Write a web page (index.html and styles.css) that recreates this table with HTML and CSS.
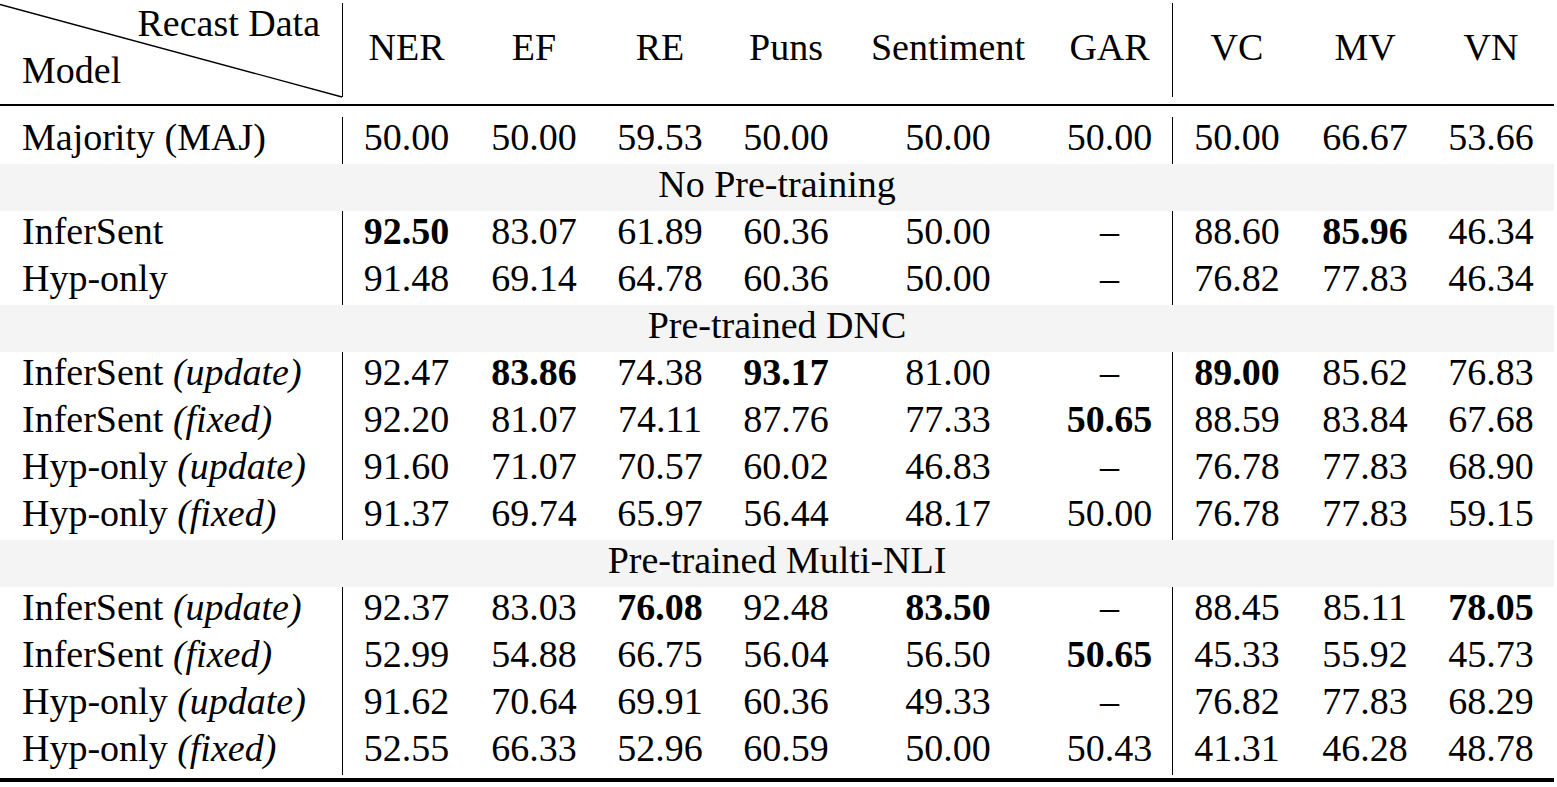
FILE: index.html
```html
<!DOCTYPE html>
<html lang="en">
<head>
<meta charset="utf-8">
<title>Recast Data Results</title>
<link rel="stylesheet" href="styles.css">
</head>
<body>
<table class="results">
  <colgroup>
    <col class="c-model">
    <col class="c-ner">
    <col class="c-std">
    <col class="c-std">
    <col class="c-std">
    <col class="c-sent">
    <col class="c-gar">
    <col class="c-vc">
    <col class="c-std">
    <col class="c-std">
  </colgroup>
  <thead>
    <tr class="head">
      <th class="diag">
        <svg class="diag-line" viewBox="0 0 342 94" preserveAspectRatio="none" aria-hidden="true">
          <line x1="0" y1="1.5" x2="342" y2="94" />
        </svg>
        <div class="recast">Recast Data</div>
        <div class="model">Model</div>
      </th>
      <th class="vl">NER</th>
      <th>EF</th>
      <th>RE</th>
      <th>Puns</th>
      <th>Sentiment</th>
      <th>GAR</th>
      <th class="vl">VC</th>
      <th>MV</th>
      <th>VN</th>
    </tr>
  </thead>
  <tbody>
    <tr class="rule-row mid"><td colspan="10"><div class="rule thin"></div></td></tr>
    <tr>
      <td class="name">Majority (MAJ)</td>
      <td class="vl">50.00</td><td>50.00</td><td>59.53</td><td>50.00</td><td>50.00</td><td>50.00</td>
      <td class="vl">50.00</td><td>66.67</td><td>53.66</td>
    </tr>
    <tr><td class="section" colspan="10">No Pre-training</td></tr>
    <tr>
      <td class="name">InferSent</td>
      <td class="vl b">92.50</td><td>83.07</td><td>61.89</td><td>60.36</td><td>50.00</td><td>–</td>
      <td class="vl">88.60</td><td class="b">85.96</td><td>46.34</td>
    </tr>
    <tr>
      <td class="name">Hyp-only</td>
      <td class="vl">91.48</td><td>69.14</td><td>64.78</td><td>60.36</td><td>50.00</td><td>–</td>
      <td class="vl">76.82</td><td>77.83</td><td>46.34</td>
    </tr>
    <tr><td class="section" colspan="10">Pre-trained DNC</td></tr>
    <tr>
      <td class="name">InferSent <i>(update)</i></td>
      <td class="vl">92.47</td><td class="b">83.86</td><td>74.38</td><td class="b">93.17</td><td>81.00</td><td>–</td>
      <td class="vl b">89.00</td><td>85.62</td><td>76.83</td>
    </tr>
    <tr>
      <td class="name">InferSent <i>(fixed)</i></td>
      <td class="vl">92.20</td><td>81.07</td><td>74.11</td><td>87.76</td><td>77.33</td><td class="b">50.65</td>
      <td class="vl">88.59</td><td>83.84</td><td>67.68</td>
    </tr>
    <tr>
      <td class="name">Hyp-only <i>(update)</i></td>
      <td class="vl">91.60</td><td>71.07</td><td>70.57</td><td>60.02</td><td>46.83</td><td>–</td>
      <td class="vl">76.78</td><td>77.83</td><td>68.90</td>
    </tr>
    <tr>
      <td class="name">Hyp-only <i>(fixed)</i></td>
      <td class="vl">91.37</td><td>69.74</td><td>65.97</td><td>56.44</td><td>48.17</td><td>50.00</td>
      <td class="vl">76.78</td><td>77.83</td><td>59.15</td>
    </tr>
    <tr><td class="section" colspan="10">Pre-trained Multi-NLI</td></tr>
    <tr>
      <td class="name">InferSent <i>(update)</i></td>
      <td class="vl">92.37</td><td>83.03</td><td class="b">76.08</td><td>92.48</td><td class="b">83.50</td><td>–</td>
      <td class="vl">88.45</td><td>85.11</td><td class="b">78.05</td>
    </tr>
    <tr>
      <td class="name">InferSent <i>(fixed)</i></td>
      <td class="vl">52.99</td><td>54.88</td><td>66.75</td><td>56.04</td><td>56.50</td><td class="b">50.65</td>
      <td class="vl">45.33</td><td>55.92</td><td>45.73</td>
    </tr>
    <tr>
      <td class="name">Hyp-only <i>(update)</i></td>
      <td class="vl">91.62</td><td>70.64</td><td>69.91</td><td>60.36</td><td>49.33</td><td>–</td>
      <td class="vl">76.82</td><td>77.83</td><td>68.29</td>
    </tr>
    <tr>
      <td class="name">Hyp-only <i>(fixed)</i></td>
      <td class="vl">52.55</td><td>66.33</td><td>52.96</td><td>60.59</td><td>50.00</td><td>50.43</td>
      <td class="vl">41.31</td><td>46.28</td><td>48.78</td>
    </tr>
    <tr class="rule-row bottom"><td colspan="10"><div class="rule thick"></div></td></tr>
  </tbody>
</table>
</body>
</html>
```

FILE: styles.css
```css
html, body {
  margin: 0;
  background: #ffffff;
}

body {
  padding-top: 3px;
}

.results {
  width: 1554px;
  table-layout: fixed;
  border-collapse: separate;
  border-spacing: 0;
  font-family: "Liberation Serif", "Times New Roman", serif;
  font-size: 38px;
  color: #000000;
}

.c-model { width: 342px; }
.c-ner { width: 129px; }
.c-std { width: 126px; }
.c-sent { width: 198px; }
.c-gar { width: 125px; }
.c-vc { width: 130px; }

.results th,
.results td {
  padding: 0 0 7px 0;
  line-height: 40px;
  text-align: center;
  white-space: nowrap;
  font-weight: normal;
}

.results .head th {
  height: 94px;
  box-sizing: border-box;
  padding: 24px 0 0 0;
  vertical-align: top;
}

.results .head th.diag {
  position: relative;
  padding: 0;
  text-align: left;
}

.diag-line {
  position: absolute;
  left: 0;
  top: 0;
  width: 100%;
  height: 100%;
  overflow: visible;
}

.diag-line line {
  stroke: #000000;
  stroke-width: 1.3;
  vector-effect: non-scaling-stroke;
}

.recast {
  text-align: right;
  padding: 0 22px 7px 0;
  line-height: 40px;
}

.model {
  text-align: left;
  padding: 0 0 7px 22px;
  line-height: 40px;
}

.vl {
  box-shadow: inset 1px 0 0 #000000;
}

.results td.name {
  text-align: left;
  padding-left: 22px;
}

.results td.section {
  background: #f4f4f4;
  text-align: center;
}

.results td.b {
  font-weight: bold;
}

.results .rule-row td {
  line-height: 0;
  font-size: 0;
  padding: 0;
}

.results .rule-row.mid td {
  padding: 7px 0 11px 0;
}

.results .rule-row.bottom td {
  padding: 3px 0 0 0;
}

.rule {
  background: #000000;
  width: 100%;
}

.rule.thin {
  height: 2px;
}

.rule.thick {
  height: 4px;
}
```
